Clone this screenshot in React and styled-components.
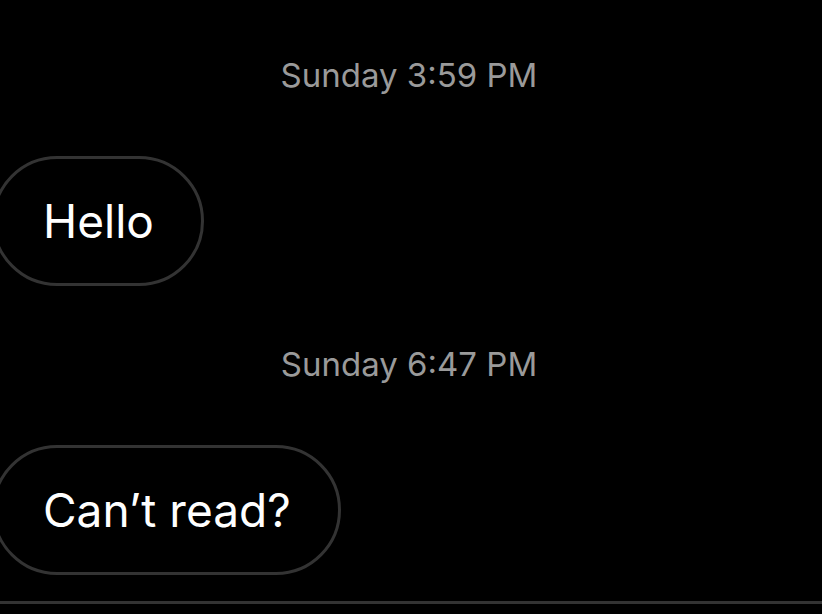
import React from "react";
import styled, { createGlobalStyle } from "styled-components";

const GlobalStyle = createGlobalStyle`
  body {
    margin: 0;
    background: #000;
    font-family: Inter, "Noto Sans", sans-serif;
  }
`;

const Thread = styled.div`
  width: 822px;
  height: 614px;
  overflow: hidden;
  background: #000;
  display: flex;
  flex-direction: column;
  padding-top: 56px;
  box-sizing: border-box;
`;

const Stamp = styled.div`
  height: 38px;
  line-height: 38px;
  text-align: center;
  font-size: 33px;
  color: #9a9a9a;
  margin-bottom: 62px;
  padding-right: 4px;
`;

const Bubble = styled.div`
  align-self: flex-start;
  box-sizing: border-box;
  height: 130px;
  margin-left: -8px;
  padding: 0 47px 0 48px;
  border: 3px solid #333;
  border-radius: 65px;
  display: flex;
  align-items: center;
  color: #fff;
  font-size: 46px;
  margin-bottom: ${(p) => p.gap}px;
`;

const Divider = styled.div`
  height: 3px;
  background: #333;
`;

const App = () => (
  <>
    <GlobalStyle />
    <Thread>
      <Stamp>Sunday 3:59 PM</Stamp>
      <Bubble gap={59}>Hello</Bubble>
      <Stamp>Sunday 6:47 PM</Stamp>
      <Bubble gap={26}>Can’t read?</Bubble>
      <Divider />
    </Thread>
  </>
);

export default App;
